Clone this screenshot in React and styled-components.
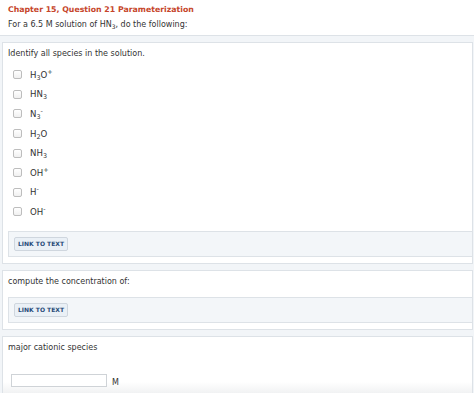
import React from 'react';
import styled, { createGlobalStyle } from 'styled-components';

const GlobalStyle = createGlobalStyle`
  html, body {
    margin: 0;
    padding: 0;
    background: #ffffff;
  }
  body {
    font-family: "DejaVu Sans", Verdana, sans-serif;
    color: #333333;
  }
`;

const Page = styled.div`
  width: 474px;
  height: 393px;
  overflow: hidden;
  display: flex;
  flex-direction: column;
  gap: 6px;
  background: #f2f5f8;
`;

const Header = styled.header`
  background: #ffffff;
  border-bottom: 1px solid #dde2e7;
  padding: 4px 8px 4px;
  height: 27px;
  display: flex;
  flex-direction: column;
  gap: 3px;
`;

const Title = styled.h1`
  margin: 0;
  font-size: 7.8px;
  line-height: 12px;
  font-weight: bold;
  color: #c6452a;
`;

const Subtitle = styled.p`
  margin: 0;
  font-size: 8px;
  line-height: 12px;
`;

const Panel = styled.section`
  background: #ffffff;
  border: 1px solid #dde2e7;
  margin: 0 1px 0 2px;
  padding: 5px 0 6px 5px;
  flex: ${(p) => (p.$grow ? 1 : 'none')};
  ${(p) => p.$fade && 'background: linear-gradient(#fff 80%, #f1f2f3 100%);'}
`;

const Prompt = styled.p`
  margin: 0;
  font-size: 8px;
  line-height: 12px;
`;

const Options = styled.ul`
  list-style: none;
  margin: 5px 0 0;
  padding: 0 0 0 5px;
`;

const Option = styled.li`
  height: 19.6px;
  display: flex;
  align-items: center;
  gap: 8px;
  font-size: 8.6px;
`;

const Box = styled.span`
  width: 7px;
  height: 7px;
  border: 1px solid #bdbdbd;
  border-radius: 2px;
  background: linear-gradient(#ffffff, #f0f0f0);
  flex: none;
`;

const Sub = styled.sub`
  font-size: 0.75em;
  vertical-align: -0.3em;
  line-height: 0;
`;

const Sup = styled.sup`
  font-size: 0.75em;
  vertical-align: 0.55em;
  line-height: 0;
`;

const LinkBox = styled.div`
  margin-top: ${(p) => p.$top}px;
  background: #f3f6f9;
  border: 1px solid #dde2e7;
  border-right: none;
  padding: 5px 5px 5px;
`;

const LinkButton = styled.button`
  display: block;
  height: 14px;
  padding: 0 3px;
  border: 1px solid #cfd6de;
  border-radius: 2px;
  background: #eaf0f6;
  color: #264a78;
  font-family: "DejaVu Sans", Verdana, sans-serif;
  font-weight: bold;
  font-size: 6px;
`;

const AnswerRow = styled.div`
  margin-top: 20px;
  padding-left: 3px;
  display: flex;
  align-items: flex-end;
  gap: 5px;
  font-size: 8px;
`;

const Input = styled.input`
  width: 94px;
  height: 11px;
  border: 1px solid #cfd3d7;
  padding: 0;
  margin: 0;
  background: #fff;
`;

const species = [
  <>H<Sub>3</Sub>O<Sup>+</Sup></>,
  <>HN<Sub>3</Sub></>,
  <>N<Sub>3</Sub><Sup>-</Sup></>,
  <>H<Sub>2</Sub>O</>,
  <>NH<Sub>3</Sub></>,
  <>OH<Sup>+</Sup></>,
  <>H<Sup>-</Sup></>,
  <>OH<Sup>-</Sup></>,
];

export default function App() {
  return (
    <>
      <GlobalStyle />
      <Page>
        <Header>
          <Title>Chapter 15, Question 21 Parameterization</Title>
          <Subtitle>
            For a 6.5 M solution of HN<Sub>3</Sub>, do the following:
          </Subtitle>
        </Header>

        <Panel>
          <Prompt>Identify all species in the solution.</Prompt>
          <Options>
            {species.map((s, i) => (
              <Option key={i}>
                <Box />
                <span>{s}</span>
              </Option>
            ))}
          </Options>
          <LinkBox $top={9}>
            <LinkButton>LINK TO TEXT</LinkButton>
          </LinkBox>
        </Panel>

        <Panel>
          <Prompt>compute the concentration of:</Prompt>
          <LinkBox $top={9}>
            <LinkButton>LINK TO TEXT</LinkButton>
          </LinkBox>
        </Panel>

        <Panel $grow $fade>
          <Prompt>major cationic species</Prompt>
          <AnswerRow>
            <Input />
            <span>M</span>
          </AnswerRow>
        </Panel>
      </Page>
    </>
  );
}
